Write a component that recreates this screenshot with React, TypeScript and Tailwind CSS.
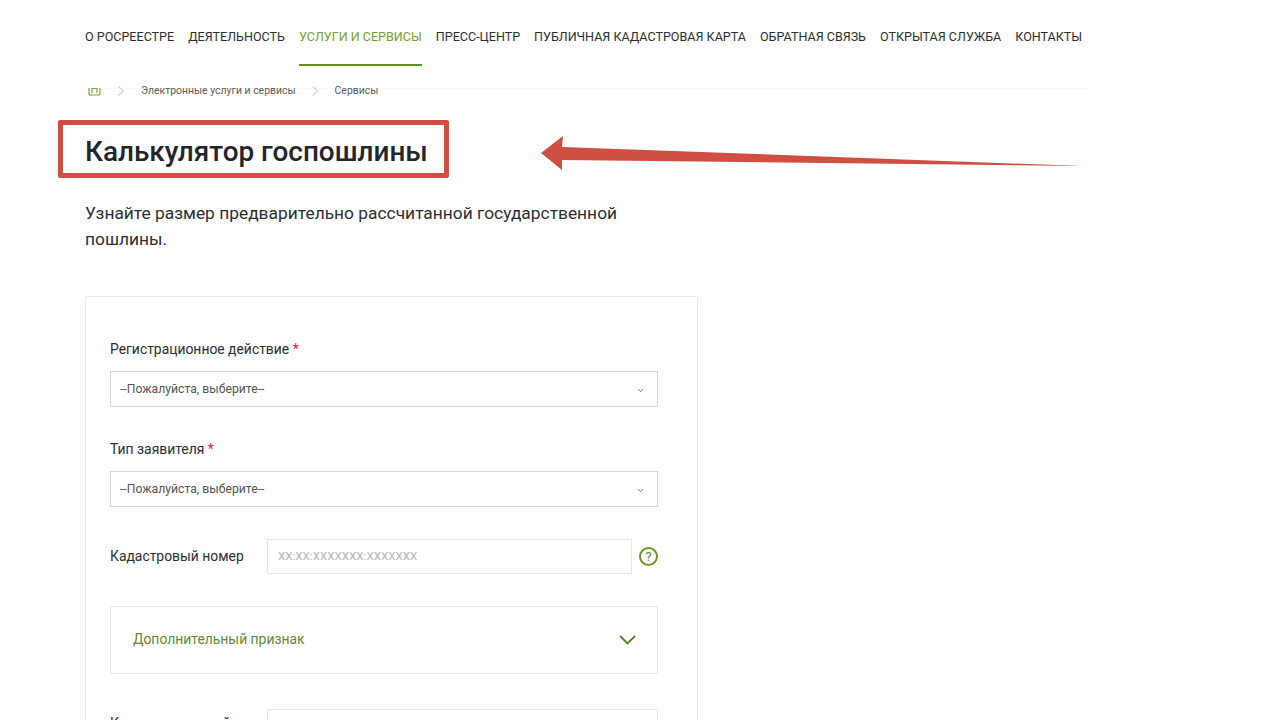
import { ChevronDown } from "lucide-react";

const NAV = [
  "О РОСРЕЕСТРЕ",
  "ДЕЯТЕЛЬНОСТЬ",
  "УСЛУГИ И СЕРВИСЫ",
  "ПРЕСС-ЦЕНТР",
  "ПУБЛИЧНАЯ КАДАСТРОВАЯ КАРТА",
  "ОБРАТНАЯ СВЯЗЬ",
  "ОТКРЫТАЯ СЛУЖБА",
  "КОНТАКТЫ",
];

function Crumb() {
  return (
    <svg width="6" height="10" viewBox="0 0 6 10" fill="none" stroke="#b8b8b8" strokeWidth="1">
      <path d="M0.5 0.5 L5.5 5 L0.5 9.5" />
    </svg>
  );
}

function SelectField({ label }: { label: string }) {
  return (
    <div className="flex flex-col">
      <label className="text-[13.9px] leading-[20px] text-[#2b2f33] mb-[12px]">
        {label} <span className="text-[#e0202c]">*</span>
      </label>
      <div className="h-[36px] border border-[#d4d4d4] flex items-center justify-between pl-[9px] pr-[12px] text-[12.2px] text-[#555]">
        <span>--Пожалуйста, выберите--</span>
        <ChevronDown size={9} strokeWidth={2.5} className="mt-[2px] text-[#666]" />
      </div>
    </div>
  );
}

export default function App() {
  return (
    <div className="relative w-[1280px] h-[720px] overflow-hidden bg-white font-['Roboto',sans-serif]">
      <nav className="h-[66px] pl-[85px] flex gap-[14px]">
        {NAV.map((item) => {
          const active = item === "УСЛУГИ И СЕРВИСЫ";
          return (
            <div
              key={item}
              className={`h-[66px] pt-[28px] text-[12.55px] leading-[18px] border-b-2 ${
                active ? "text-[#7aa02c] border-[#5f8f1c]" : "text-[#2b2f33] border-transparent"
              }`}
            >
              {item}
            </div>
          );
        })}
      </nav>

      {/* тонкая линия под хлебными крошками */}
      <div className="absolute left-[85px] top-[88px] w-[1003px] h-px bg-[#f8f8f8]" />

      <div className="relative ml-[85px] h-[48px] pt-[2px] flex items-center text-[10.45px] text-[#5c5c5c]">
        <svg className="ml-[3px]" width="13" height="9" viewBox="0 0 13 9" fill="none" stroke="#7ea63c" strokeWidth="1.2">
          <path d="M1 1 V6 Q1 8 3 8 H10 Q12 8 12 6 V1 M4 6 V1.5 H9 V6" />
        </svg>
        <span className="ml-[17px] flex"><Crumb /></span>
        <span className="ml-[17px]">Электронные услуги и сервисы</span>
        <span className="ml-[16px] flex"><Crumb /></span>
        <span className="ml-[17px]">Сервисы</span>
      </div>

      <main className="pl-[85px]">
        <h1 className="mt-[20px] text-[27.9px] leading-[36px] font-medium text-[#22262a]">
          Калькулятор госпошлины
        </h1>
        <p className="mt-[30px] w-[560px] text-[17.37px] leading-[26px] text-[#2b2f33]">
          Узнайте размер предварительно рассчитанной государственной пошлины.
        </p>

        <div className="mt-[44px] w-[613px] border border-[#ebebeb] rounded-[2px] pl-[24px] pr-[39px] pt-[42px] pb-[24px] flex flex-col">
          <SelectField label="Регистрационное действие" />
          <div className="mt-[32px]">
            <SelectField label="Тип заявителя" />
          </div>

          <div className="mt-[32px] flex items-center h-[35px]">
            <span className="w-[157px] text-[13.9px] text-[#2b2f33]">Кадастровый номер</span>
            <div className="w-[365px] h-[35px] border border-[#e6e6e6] flex items-center pl-[10px] text-[11.6px] text-[#b5b5b5]">
              XX:XX:XXXXXXX:XXXXXXX
            </div>
            <div className="ml-[7px] w-[19px] h-[19px] rounded-full border-2 border-[#6d9a26] flex items-center justify-center text-[13px] leading-none text-[#5f8a26]">
              ?
            </div>
          </div>

          <div className="mt-[32px] h-[68px] border border-[#e9e9e9] rounded-[2px] pl-[22px] pr-[21px] flex items-center justify-between">
            <span className="pb-[1px] text-[13.9px] text-[#5f8a38]">Дополнительный признак</span>
            <svg width="17" height="10" viewBox="0 0 17 10" fill="none" stroke="#5a7d2a" strokeWidth="1.8">
              <path d="M1 1 L8.5 8.5 L16 1" />
            </svg>
          </div>

          <div className="mt-[35px] flex items-start h-[35px]">
            <span className="w-[157px] pt-[4px] text-[13.9px] leading-[20px] whitespace-nowrap text-[#2b2f33]">Количество долей</span>
            <div className="w-[391px] h-[35px] border border-[#e6e6e6]" />
          </div>
        </div>
      </main>

      {/* Разметка поверх скриншота */}
      <div className="absolute left-[58px] top-[120px] w-[391px] h-[58px] border-[5px] border-[#cf4f44] rounded-[2px]" />
      <svg className="absolute left-[540px] top-[135px]" width="546" height="36" viewBox="0 0 546 36">
        <path d="M1 18 L23 1 L22 12 L543 31 L22 25 L22 35 Z" fill="#cf4f44" />
      </svg>
    </div>
  );
}
